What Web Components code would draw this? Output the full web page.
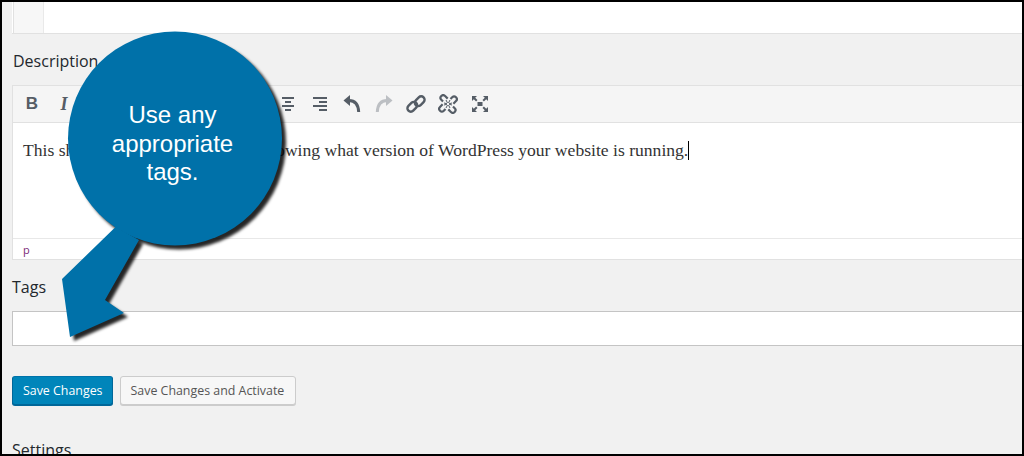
<!DOCTYPE html>
<html>
<head>
<meta charset="utf-8">
<title>Edit tag</title>
<style>
    html, body { margin: 0; padding: 0; }
    body { background: #f1f1f1; font-family: "Open Sans", sans-serif; }
</style>
</head>
<body>

<wp-screen>
    <top-box></top-box>
    <field-label>Description</field-label>
    <editor-box>This should prevent the site from showing what version of WordPress your website is running.</editor-box>
    <field-label class="tags">Tags</field-label>
    <text-field></text-field>
    <button-row>
        <wp-button primary>Save Changes</wp-button>
        <wp-button>Save Changes and Activate</wp-button>
    </button-row>
    <field-label class="settings">Settings</field-label>
    <callout-bubble>Use any<br>appropriate<br>tags.</callout-bubble>
</wp-screen>

<script>
// frame round the whole picture
class WpScreen extends HTMLElement {
    constructor() {
        super();
        this.attachShadow({mode: 'open'});
        this.shadowRoot.innerHTML = `
        <style>
            :host {
                display: block;
                position: relative;
                box-sizing: border-box;
                width: 1024px;
                height: 456px;
                overflow: hidden;
                border: 2px solid #000;
                padding-left: 10px;
                background: #f1f1f1;
            }
        </style>
        <slot></slot>`;
    }
}

class TopBox extends HTMLElement {
    constructor() {
        super();
        this.attachShadow({mode: 'open'});
        this.shadowRoot.innerHTML = `
        <style>
            :host {
                display: flex;
                height: 31px;
                margin-right: -1px;
                background: #fff;
                border-bottom: 1px solid #e1e1e1;
            }
            .gutter {
                width: 29px;
                margin-left: 1px;
                background: #f7f7f7;
                border-left: 1px solid #e1e1e1;
                border-right: 1px solid #e9e9e9;
            }
        </style>
        <div class="gutter"></div>`;
    }
}

class FieldLabel extends HTMLElement {
    constructor() {
        super();
        this.attachShadow({mode: 'open'});
        this.shadowRoot.innerHTML = `
        <style>
            :host {
                display: block;
                height: 22px;
                margin: 16px 0 13px 1px;
                font: 500 16px/22px "Open Sans", sans-serif;
                color: #23282d;
            }
            :host(.tags) { margin: 16px 0 13px 0; }
            :host(.settings) { margin: 34px 0 0 0; }
        </style>
        <slot></slot>`;
    }
}

const ICONS = {
    alignCenter: '<path d="M4 3h12v2H4zM7 7h6v2H7zM4 11h12v2H4zM7 15h6v2H7z"/>',
    alignRight: '<path d="M3 3h14v2H3zM9 7h8v2H9zM3 11h14v2H3zM9 15h8v2H9z"/>',
    undo: '<path d="M1.500 6.500L8 1v11z"/><path d="M7 6.500c5 0 9.200 2.200 9.700 11.500" fill="none" stroke="currentColor" stroke-width="3"/>',
    link: '<g fill="none" stroke="currentColor" stroke-width="2.400"><rect x="0.800" y="9.400" width="11" height="6.800" rx="3.400" transform="rotate(-45 6.300 12.800)"/><rect x="8.200" y="3.800" width="11" height="6.800" rx="3.400" transform="rotate(-45 13.700 7.200)"/></g>',
    unlink: '<g fill="none" stroke="currentColor" stroke-width="2.200"><path d="M7.500 15l-1.700 1.700a2.700 2.700 0 0 1-3.800 0 2.700 2.700 0 0 1 0-3.800l2.600-2.600"/><path d="M12.500 5l1.700-1.700a2.700 2.700 0 0 1 3.800 0 2.700 2.700 0 0 1 0 3.800l-2.600 2.600"/><path d="M5 7.500L3.300 5.800a2.700 2.700 0 0 1 0-3.800 2.700 2.700 0 0 1 3.800 0l2.600 2.600"/><path d="M15 12.500l1.700 1.700a2.700 2.700 0 0 1 0 3.800 2.700 2.700 0 0 1-3.800 0l-2.600-2.600"/></g><path d="M6 9l3 .8M14 9l-3 .8M6 11l3-.8M14 11l-3-.8M8 14l1.500-3M12 14l-1.500-3M8 6l1.500 3M12 6l-1.500 3" stroke="currentColor" stroke-width="1"/>',
    fullscreen: '<path d="M2 2h5L5.200 3.800 7.500 6.100 6.100 7.500 3.800 5.200 2 7zM18 2v5l-1.800-1.800-2.300 2.300-1.400-1.400 2.300-2.300L13 2zM2 18v-5l1.800 1.800 2.300-2.300 1.400 1.400-2.300 2.300L7 18zM18 18h-5l1.800-1.800-2.300-2.300 1.400-1.400 2.300 2.300L18 13z"/><path d="M7.500 8h5v4h-5z"/>'
};

class ToolButton extends HTMLElement {
    constructor() {
        super();
        this.attachShadow({mode: 'open'});
        const icon = this.getAttribute('icon');
        const flip = this.hasAttribute('flip') ? ' transform="matrix(-1 0 0 1 20 0)"' : '';
        const body = icon ? `<svg viewBox="0 0 20 20" width="20" height="20"><g${flip}>${ICONS[icon]}</g></svg>` : '<slot></slot>';
        this.shadowRoot.innerHTML = `
        <style>
            :host {
                display: flex;
                align-items: center;
                justify-content: center;
                width: 32px;
                height: 36px;
                color: #555d66;
            }
            :host([disabled]) { color: #bcbfc3; }
            svg { display: block; fill: currentColor; }
            :host(.bold) { font: 700 17px "Liberation Sans", sans-serif; }
            :host(.italic) { font: italic 700 18px "Liberation Serif", serif; }
        </style>
        ${body}`;
    }
}

class EditorBox extends HTMLElement {
    constructor() {
        super();
        this.attachShadow({mode: 'open'});
        this.shadowRoot.innerHTML = `
        <style>
            :host {
                display: block;
                margin-right: -1px;
                background: #fff;
                border: solid #e1e1e1;
                border-width: 1px 0 1px 1px;
            }
            .toolbar {
                display: flex;
                height: 36px;
                padding-left: 3px;
                background: #f5f5f5;
                border-bottom: 1px solid #e1e1e1;
            }
            .body {
                height: 115px;
                box-sizing: border-box;
                padding: 15px 0 0 10px;
                font: 17.600px/24px "Liberation Serif", serif;
                color: #333;
                white-space: nowrap;
                overflow: hidden;
            }
            .caret { display: inline-block; width: 1px; height: 19px; background: #000; vertical-align: -4px; }
            .path {
                height: 20px;
                padding-left: 10px;
                border-top: 1px solid #e8e8e8;
                font: 11px/21px "Open Sans", sans-serif;
                color: #7c2a78;
            }
        </style>
        <div class="toolbar">
            <tool-button class="bold">B</tool-button>
            <tool-button class="italic">I</tool-button>
            <tool-button></tool-button>
            <tool-button></tool-button>
            <tool-button></tool-button>
            <tool-button></tool-button>
            <tool-button></tool-button>
            <tool-button></tool-button>
            <tool-button icon="alignCenter"></tool-button>
            <tool-button icon="alignRight"></tool-button>
            <tool-button icon="undo"></tool-button>
            <tool-button icon="undo" flip disabled></tool-button>
            <tool-button icon="link"></tool-button>
            <tool-button icon="unlink"></tool-button>
            <tool-button icon="fullscreen"></tool-button>
        </div>
        <div class="body"><slot></slot><span class="caret"></span></div>
        <div class="path">p</div>`;
    }
}

class TextField extends HTMLElement {
    constructor() {
        super();
        this.attachShadow({mode: 'open'});
        this.shadowRoot.innerHTML = `
        <style>
            :host {
                display: block;
                height: 33px;
                margin-right: -1px;
                background: #fff;
                border: solid #c4c4c4;
                border-width: 1px 0 1px 1px;
            }
        </style>`;
    }
}

class ButtonRow extends HTMLElement {
    constructor() {
        super();
        this.attachShadow({mode: 'open'});
        this.shadowRoot.innerHTML = `
        <style>
            :host {
                display: flex;
                gap: 7px;
                margin-top: 30px;
            }
        </style>
        <slot></slot>`;
    }
}

class WpButton extends HTMLElement {
    constructor() {
        super();
        this.attachShadow({mode: 'open'});
        this.shadowRoot.innerHTML = `
        <style>
            :host {
                display: block;
                box-sizing: border-box;
                height: 29px;
                padding: 0 11px 0 10px;
                border: 1px solid #ccc;
                border-radius: 3px;
                background: #f7f7f7;
                box-shadow: 0 1px 0 #ccc;
                font: 12.400px/27px "Open Sans", sans-serif;
                color: #555;
            }
            :host([primary]) {
                padding: 0 9px 0 10px;
                background: #0085ba;
                border-color: #0073aa #006799 #006799;
                box-shadow: 0 1px 0 #006799;
                color: #fff;
            }
        </style>
        <slot></slot>`;
    }
}

// the big blue callout lies over the form
class CalloutBubble extends HTMLElement {
    constructor() {
        super();
        this.attachShadow({mode: 'open'});
        this.shadowRoot.innerHTML = `
        <style>
            :host {
                display: block;
                position: absolute;
                left: 0;
                top: 0;
                width: 400px;
                height: 400px;
            }
            svg { position: absolute; left: -2px; top: -2px; }
            .text {
                position: absolute;
                left: 65px;
                width: 211px;
                top: 99px;
                text-align: center;
                font: 24px/28.500px "Liberation Sans", sans-serif;
                color: #fff;
            }
        </style>
        <svg width="400" height="400" viewBox="0 0 400 400">
            <defs>
                <filter id="shade" x="-20%" y="-20%" width="140%" height="140%">
                    <feGaussianBlur stdDeviation="1.800"/>
                </filter>
                <g id="shape">
                    <circle cx="175" cy="138.500" r="107"/>
                    <path d="M115.500 227L62 279l8 58 54-24-19-13 34-60z"/>
                </g>
            </defs>
            <use href="#shape" fill="#000" fill-opacity=".85" filter="url(#shade)" x="4" y="4"/>
            <use href="#shape" fill="#0071a9"/>
        </svg>
        <div class="text"><slot></slot></div>`;
    }
}

customElements.define('wp-screen', WpScreen);
customElements.define('top-box', TopBox);
customElements.define('field-label', FieldLabel);
customElements.define('tool-button', ToolButton);
customElements.define('editor-box', EditorBox);
customElements.define('text-field', TextField);
customElements.define('button-row', ButtonRow);
customElements.define('wp-button', WpButton);
customElements.define('callout-bubble', CalloutBubble);
</script>
</body>
</html>
